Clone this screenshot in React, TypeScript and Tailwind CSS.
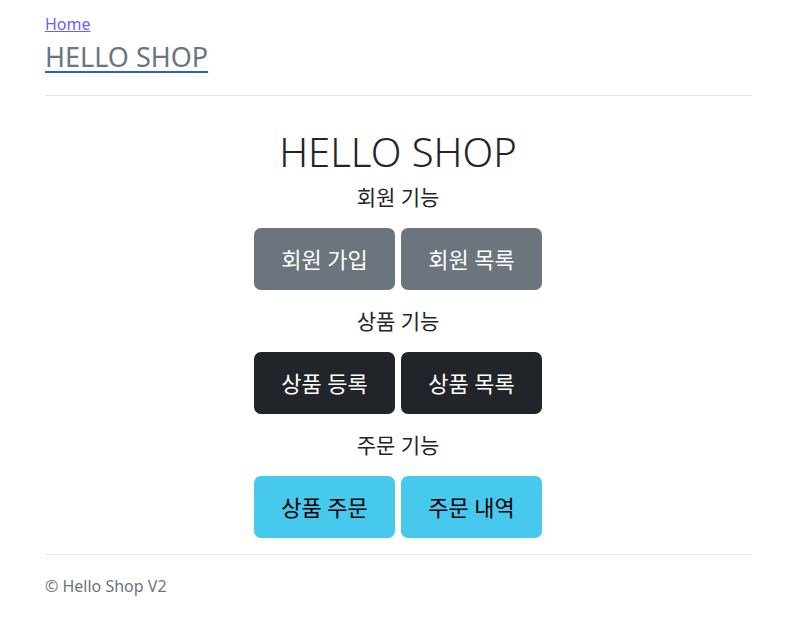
export default function App() {
  const sections = [
    { title: '회원 기능', buttons: ['회원 가입', '회원 목록'], cls: 'bg-[#6c757d] text-white' },
    { title: '상품 기능', buttons: ['상품 등록', '상품 목록'], cls: 'bg-[#212529] text-white' },
    { title: '주문 기능', buttons: ['상품 주문', '주문 내역'], cls: 'bg-[#47c8ed] text-black' },
  ];

  return (
    <div
      className="mx-[45px] w-[706px] pt-[12px] text-[#212529]"
      style={{ fontFamily: '"Noto Sans", "Noto Sans CJK KR", sans-serif' }}
    >
      <header className="pb-[17px] border-b border-[#e5e5e5]">
        <a href="#" className="block text-[16px] leading-[24px] text-[#6c5ff5] underline">
          Home
        </a>
        <a
          href="#"
          className="inline-block text-[27px] leading-[42px] text-[#6c757d] underline decoration-[#2d5fcf] decoration-2 underline-offset-[4px]"
        >
          HELLO SHOP
        </a>
      </header>

      <main className="flex flex-col items-center pt-[32px] pb-[16px] border-b border-[#e5e5e5]">
        <h1 className="text-[40px] leading-[48px] font-light">HELLO SHOP</h1>
        {sections.map((s, i) => (
          <div key={s.title} className="flex flex-col items-center">
            <p className={`text-[21px] leading-[26px] ${i === 0 ? 'mt-[8px]' : 'mt-[18px]'}`}>
              {s.title}
            </p>
            <div className="flex gap-[6px] mt-[18px]">
              {s.buttons.map((b) => (
                <button
                  key={b}
                  className={`w-[141px] h-[62px] rounded-[7px] text-[22px] ${s.cls}`}
                >
                  {b}
                </button>
              ))}
            </div>
          </div>
        ))}
      </main>

      <footer className="pt-[19px] text-[16px] leading-[24px] text-[#6c757d]">© Hello Shop V2</footer>
    </div>
  );
}
